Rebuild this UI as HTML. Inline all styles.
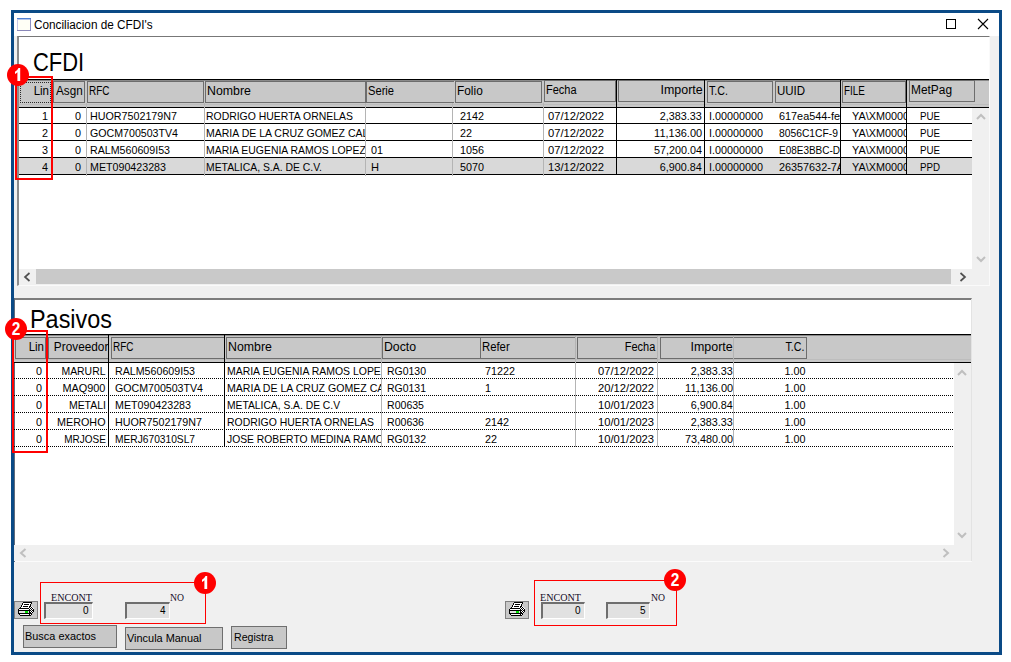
<!DOCTYPE html>
<html><head><meta charset="utf-8"><title>Conciliacion de CFDI's</title>
<style>
html,body{margin:0;padding:0;background:#fff;}
body{width:1011px;height:662px;position:relative;overflow:hidden;font-family:"Liberation Sans",sans-serif;color:#000;}
div,span,svg{position:absolute;box-sizing:border-box;}
.t{white-space:pre;line-height:normal;font-family:"Liberation Sans",sans-serif;}
.tf{font-family:"Liberation Serif",serif;}
.c{overflow:hidden;}
.hc{border:1px solid #6d6d6d;background:#c8c8c8;overflow:hidden;}
.btn{background:#c8c8c8;border:1px solid #6f6f6f;overflow:hidden;}
.inp{background:#e1e1e1;border-top:2px solid #6e6e6e;border-left:2px solid #6e6e6e;border-right:1px solid #fff;border-bottom:1px solid #fff;overflow:hidden;}
.red{border:2px solid #f00;}
.circ{width:22px;height:22px;border-radius:50%;background:#f00;}
</style></head>
<body>
<div style="left:11px;top:10px;width:991px;height:645px;background:#f0f0f0;border:3px solid #0a4a86;"></div>
<div style="left:14px;top:13px;width:985px;height:23px;background:#fff;"></div>
<svg style="left:17px;top:18px" width="14" height="13" viewBox="0 0 14 13" shape-rendering="crispEdges"><rect x="0" y="0" width="14" height="13" fill="#fffff6"/><rect x="0" y="0" width="1" height="13" fill="#c6c8e6"/><rect x="13" y="0" width="1" height="13" fill="#8d8fc2"/><rect x="0" y="12" width="14" height="1" fill="#8987b8"/><rect x="0" y="0" width="14" height="1" fill="#4f80d2"/><rect x="1" y="1" width="12" height="1" fill="#b5c6ec"/></svg>
<span class="t" style="top:18px;font-size:12.5px;left:34px;transform-origin:0 0;transform:scaleX(0.9412);">Conciliacion de CFDI's</span>
<svg style="left:946px;top:19px" width="10" height="10" viewBox="0 0 10 10" shape-rendering="crispEdges"><rect x="0.5" y="0.5" width="9" height="9" fill="none" stroke="#000" stroke-width="1"/></svg>
<svg style="left:977px;top:18px" width="12" height="12" viewBox="0 0 12 12"><path d="M1 1 L11 11 M11 1 L1 11" stroke="#000" stroke-width="1.1" fill="none"/></svg>
<div style="left:17px;top:36px;width:973px;height:250px;background:#fff;border-left:2px solid #8c8c8c;border-top:1px solid #777;border-right:1px solid #fafafa;border-bottom:1px solid #fafafa;"></div>
<div style="left:972px;top:108px;width:17px;height:161px;background:#f0f0f0;"></div>
<svg style="left:976px;top:113px" width="10" height="7" viewBox="0 0 10 7"><path d="M1 6 L5 2 L9 6" stroke="#bfbfbf" stroke-width="2" fill="none"/></svg>
<svg style="left:976px;top:256px" width="10" height="7" viewBox="0 0 10 7"><path d="M1 1 L5 5 L9 1" stroke="#bfbfbf" stroke-width="2" fill="none"/></svg>
<div style="left:19px;top:269px;width:970px;height:16px;background:#f0f0f0;"></div>
<div style="left:36px;top:269px;width:915px;height:15px;background:#c9c9c9;"></div>
<svg style="left:23px;top:272px" width="8" height="10" viewBox="0 0 8 10"><path d="M6.5 1 L2 5 L6.5 9" stroke="#505050" stroke-width="1.7" fill="none"/></svg>
<svg style="left:959px;top:272px" width="8" height="10" viewBox="0 0 8 10"><path d="M1.5 1 L6 5 L1.5 9" stroke="#505050" stroke-width="1.7" fill="none"/></svg>
<span class="t" style="top:48px;font-size:25px;left:33.0px;transform-origin:0 0;transform:scaleX(0.8778);">CFDI</span>
<div style="left:19px;top:79px;width:970px;height:29px;background:#c8c8c8;border-top:1px solid #000;border-bottom:1px solid #000;"></div>
<div style="left:19px;top:80px;width:970px;height:1px;background:#8a8a8a;"></div>
<div style="left:19px;top:104px;width:970px;height:1px;background:#bdbdbd;"></div>
<div class="hc" style="left:20px;top:82px;width:31px;height:21px;border:1px dotted #2a2a2a;"><span class="t" style="top:1px;font-size:12px;right:1px;transform-origin:100% 0;transform:scaleX(0.9577);">Lin</span></div>
<div class="hc" style="left:53px;top:81px;width:32px;height:22px;"><span class="t" style="top:2px;font-size:12px;left:2px;transform-origin:0 0;transform:scaleX(0.9753);">Asgn</span></div>
<div class="hc" style="left:87px;top:81px;width:117px;height:22px;"><span class="t" style="top:2px;font-size:12px;left:1px;transform-origin:0 0;transform:scaleX(0.8301);">RFC</span></div>
<div class="hc" style="left:205px;top:81px;width:161px;height:22px;"><span class="t" style="top:2px;font-size:12px;left:1px;transform-origin:0 0;transform:scaleX(1.0271);">Nombre</span></div>
<div class="hc" style="left:366px;top:81px;width:88px;height:22px;border-right:none;"><span class="t" style="top:2px;font-size:12px;left:1px;transform-origin:0 0;transform:scaleX(0.9283);">Serie</span></div>
<div class="hc" style="left:455px;top:81px;width:87px;height:22px;"><span class="t" style="top:2px;font-size:12px;left:1px;transform-origin:0 0;transform:scaleX(0.9892);">Folio</span></div>
<div class="hc" style="left:544px;top:80px;width:72px;height:22px;"><span class="t" style="top:2px;font-size:12px;left:1px;transform-origin:0 0;transform:scaleX(0.9168);">Fecha</span></div>
<div class="hc" style="left:618px;top:80px;width:87px;height:22px;border-right:none;"><span class="t" style="top:2px;font-size:12px;right:2px;transform-origin:100% 0;transform:scaleX(1.0354);">Importe</span></div>
<div class="hc" style="left:707px;top:81px;width:66px;height:22px;"><span class="t" style="top:2px;font-size:12px;left:1px;transform-origin:0 0;transform:scaleX(0.8870);">T.C.</span></div>
<div class="hc" style="left:775px;top:81px;width:66px;height:22px;border-right:none;"><span class="t" style="top:2px;font-size:12px;left:1px;transform-origin:0 0;transform:scaleX(0.9577);">UUID</span></div>
<div class="hc" style="left:842px;top:81px;width:64px;height:22px;"><span class="t" style="top:2px;font-size:12px;left:1px;transform-origin:0 0;transform:scaleX(0.8192);">FILE</span></div>
<div class="hc" style="left:909px;top:80px;width:66px;height:22px;"><span class="t" style="top:2px;font-size:12px;left:1px;transform-origin:0 0;transform:scaleX(0.9915);">MetPag</span></div>
<div style="left:19px;top:123px;width:953px;height:1px;background:#000;"></div>
<div class="c" style="left:19px;top:108px;width:33px;height:15px;"><span class="t" style="top:2px;font-size:11px;right:4.0px;transform-origin:100% 0;transform:scaleX(0.9808);">1</span></div>
<div class="c" style="left:53px;top:108px;width:33px;height:15px;"><span class="t" style="top:2px;font-size:11px;right:5.0px;transform-origin:100% 0;transform:scaleX(0.9808);">0</span></div>
<div class="c" style="left:87px;top:108px;width:117px;height:15px;"><span class="t" style="top:2px;font-size:11px;left:2.5px;transform-origin:0 0;transform:scaleX(0.9745);">HUOR7502179N7</span></div>
<div class="c" style="left:205px;top:108px;width:160px;height:15px;"><span class="t" style="top:2px;font-size:11px;left:0.5px;transform-origin:0 0;transform:scaleX(0.9486);">RODRIGO HUERTA ORNELAS</span></div>
<div class="c" style="left:453px;top:108px;width:90px;height:15px;"><span class="t" style="top:2px;font-size:11px;left:6.5px;transform-origin:0 0;transform:scaleX(0.9808);">2142</span></div>
<div class="c" style="left:544px;top:108px;width:72px;height:15px;"><span class="t" style="top:2px;font-size:11px;left:3.5px;transform-origin:0 0;transform:scaleX(1.0172);">07/12/2022</span></div>
<div class="c" style="left:617px;top:108px;width:87px;height:15px;"><span class="t" style="top:2px;font-size:11px;right:2.2000000000000455px;transform-origin:100% 0;transform:scaleX(0.9809);">2,383.33</span></div>
<div class="c" style="left:705px;top:108px;width:70px;height:15px;"><span class="t" style="top:2px;font-size:11px;left:4.0px;transform-origin:0 0;transform:scaleX(0.9809);">I.00000000</span></div>
<div class="c" style="left:775px;top:108px;width:65px;height:15px;"><span class="t" style="top:2px;font-size:11px;left:4.0px;transform-origin:0 0;transform:scaleX(0.9874);">617ea544-fe</span></div>
<div class="c" style="left:841px;top:108px;width:65px;height:15px;"><span class="t" style="top:2px;font-size:11px;left:10.5px;transform-origin:0 0;transform:scaleX(0.9847);">YA\XM0000</span></div>
<div class="c" style="left:908px;top:108px;width:64px;height:15px;"><span class="t" style="top:2px;font-size:11px;left:11.5px;transform-origin:0 0;transform:scaleX(0.8843);">PUE</span></div>
<div style="left:19px;top:140px;width:953px;height:1px;background:#000;"></div>
<div class="c" style="left:19px;top:124px;width:33px;height:16px;"><span class="t" style="top:3px;font-size:11px;right:4.0px;transform-origin:100% 0;transform:scaleX(0.9808);">2</span></div>
<div class="c" style="left:53px;top:124px;width:33px;height:16px;"><span class="t" style="top:3px;font-size:11px;right:5.0px;transform-origin:100% 0;transform:scaleX(0.9808);">0</span></div>
<div class="c" style="left:87px;top:124px;width:117px;height:16px;"><span class="t" style="top:3px;font-size:11px;left:2.5px;transform-origin:0 0;transform:scaleX(0.9660);">GOCM700503TV4</span></div>
<div class="c" style="left:205px;top:124px;width:160px;height:16px;"><span class="t" style="top:3px;font-size:11px;left:0.5px;transform-origin:0 0;transform:scaleX(0.9557);">MARIA DE LA CRUZ GOMEZ CAL</span></div>
<div class="c" style="left:453px;top:124px;width:90px;height:16px;"><span class="t" style="top:3px;font-size:11px;left:6.5px;transform-origin:0 0;transform:scaleX(0.9808);">22</span></div>
<div class="c" style="left:544px;top:124px;width:72px;height:16px;"><span class="t" style="top:3px;font-size:11px;left:3.5px;transform-origin:0 0;transform:scaleX(1.0172);">07/12/2022</span></div>
<div class="c" style="left:617px;top:124px;width:87px;height:16px;"><span class="t" style="top:3px;font-size:11px;right:2.2000000000000455px;transform-origin:100% 0;transform:scaleX(0.9975);">11,136.00</span></div>
<div class="c" style="left:705px;top:124px;width:70px;height:16px;"><span class="t" style="top:3px;font-size:11px;left:4.0px;transform-origin:0 0;transform:scaleX(0.9809);">I.00000000</span></div>
<div class="c" style="left:775px;top:124px;width:65px;height:16px;"><span class="t" style="top:3px;font-size:11px;left:4.0px;transform-origin:0 0;transform:scaleX(0.9369);">8056C1CF-9</span></div>
<div class="c" style="left:841px;top:124px;width:65px;height:16px;"><span class="t" style="top:3px;font-size:11px;left:10.5px;transform-origin:0 0;transform:scaleX(0.9847);">YA\XM0000</span></div>
<div class="c" style="left:908px;top:124px;width:64px;height:16px;"><span class="t" style="top:3px;font-size:11px;left:11.5px;transform-origin:0 0;transform:scaleX(0.8843);">PUE</span></div>
<div style="left:19px;top:157px;width:953px;height:1px;background:#000;"></div>
<div class="c" style="left:19px;top:141px;width:33px;height:16px;"><span class="t" style="top:3px;font-size:11px;right:4.0px;transform-origin:100% 0;transform:scaleX(0.9808);">3</span></div>
<div class="c" style="left:53px;top:141px;width:33px;height:16px;"><span class="t" style="top:3px;font-size:11px;right:5.0px;transform-origin:100% 0;transform:scaleX(0.9808);">0</span></div>
<div class="c" style="left:87px;top:141px;width:117px;height:16px;"><span class="t" style="top:3px;font-size:11px;left:2.5px;transform-origin:0 0;transform:scaleX(0.9690);">RALM560609I53</span></div>
<div class="c" style="left:205px;top:141px;width:160px;height:16px;"><span class="t" style="top:3px;font-size:11px;left:0.5px;transform-origin:0 0;transform:scaleX(0.9478);">MARIA EUGENIA RAMOS LOPEZ</span></div>
<div class="c" style="left:366px;top:141px;width:86px;height:16px;"><span class="t" style="top:3px;font-size:11px;left:4.5px;transform-origin:0 0;transform:scaleX(0.9808);">01</span></div>
<div class="c" style="left:453px;top:141px;width:90px;height:16px;"><span class="t" style="top:3px;font-size:11px;left:6.5px;transform-origin:0 0;transform:scaleX(0.9808);">1056</span></div>
<div class="c" style="left:544px;top:141px;width:72px;height:16px;"><span class="t" style="top:3px;font-size:11px;left:3.5px;transform-origin:0 0;transform:scaleX(1.0172);">07/12/2022</span></div>
<div class="c" style="left:617px;top:141px;width:87px;height:16px;"><span class="t" style="top:3px;font-size:11px;right:2.2000000000000455px;transform-origin:100% 0;transform:scaleX(0.9809);">57,200.04</span></div>
<div class="c" style="left:705px;top:141px;width:70px;height:16px;"><span class="t" style="top:3px;font-size:11px;left:4.0px;transform-origin:0 0;transform:scaleX(0.9809);">I.00000000</span></div>
<div class="c" style="left:775px;top:141px;width:65px;height:16px;"><span class="t" style="top:3px;font-size:11px;left:4.0px;transform-origin:0 0;transform:scaleX(0.9070);">E08E3BBC-D</span></div>
<div class="c" style="left:841px;top:141px;width:65px;height:16px;"><span class="t" style="top:3px;font-size:11px;left:10.5px;transform-origin:0 0;transform:scaleX(0.9847);">YA\XM0000</span></div>
<div class="c" style="left:908px;top:141px;width:64px;height:16px;"><span class="t" style="top:3px;font-size:11px;left:11.5px;transform-origin:0 0;transform:scaleX(0.8843);">PUE</span></div>
<div style="left:19px;top:158px;width:953px;height:16px;background:#d9d9d9;"></div>
<div style="left:19px;top:174px;width:953px;height:1px;background:#000;"></div>
<div class="c" style="left:19px;top:158px;width:33px;height:16px;"><span class="t" style="top:3px;font-size:11px;right:4.0px;transform-origin:100% 0;transform:scaleX(0.9808);">4</span></div>
<div class="c" style="left:53px;top:158px;width:33px;height:16px;"><span class="t" style="top:3px;font-size:11px;right:5.0px;transform-origin:100% 0;transform:scaleX(0.9808);">0</span></div>
<div class="c" style="left:87px;top:158px;width:117px;height:16px;"><span class="t" style="top:3px;font-size:11px;left:2.5px;transform-origin:0 0;transform:scaleX(0.9709);">MET090423283</span></div>
<div class="c" style="left:205px;top:158px;width:160px;height:16px;"><span class="t" style="top:3px;font-size:11px;left:0.5px;transform-origin:0 0;transform:scaleX(0.9441);">METALICA, S.A. DE C.V.</span></div>
<div class="c" style="left:366px;top:158px;width:86px;height:16px;"><span class="t" style="top:3px;font-size:11px;left:4.5px;transform-origin:0 0;transform:scaleX(1.0071);">H</span></div>
<div class="c" style="left:453px;top:158px;width:90px;height:16px;"><span class="t" style="top:3px;font-size:11px;left:6.5px;transform-origin:0 0;transform:scaleX(0.9808);">5070</span></div>
<div class="c" style="left:544px;top:158px;width:72px;height:16px;"><span class="t" style="top:3px;font-size:11px;left:3.5px;transform-origin:0 0;transform:scaleX(1.0172);">13/12/2022</span></div>
<div class="c" style="left:617px;top:158px;width:87px;height:16px;"><span class="t" style="top:3px;font-size:11px;right:2.2000000000000455px;transform-origin:100% 0;transform:scaleX(0.9809);">6,900.84</span></div>
<div class="c" style="left:705px;top:158px;width:70px;height:16px;"><span class="t" style="top:3px;font-size:11px;left:4.0px;transform-origin:0 0;transform:scaleX(0.9809);">I.00000000</span></div>
<div class="c" style="left:775px;top:158px;width:65px;height:16px;"><span class="t" style="top:3px;font-size:11px;left:4.0px;transform-origin:0 0;transform:scaleX(0.9840);">26357632-7A</span></div>
<div class="c" style="left:841px;top:158px;width:65px;height:16px;"><span class="t" style="top:3px;font-size:11px;left:10.5px;transform-origin:0 0;transform:scaleX(0.9847);">YA\XM0000</span></div>
<div class="c" style="left:908px;top:158px;width:64px;height:16px;"><span class="t" style="top:3px;font-size:11px;left:11.5px;transform-origin:0 0;transform:scaleX(0.8843);">PPD</span></div>
<div style="left:86px;top:103px;width:1px;height:73px;background:#b4b4b4;"></div>
<div style="left:204px;top:103px;width:1px;height:73px;background:#b4b4b4;"></div>
<div style="left:365px;top:103px;width:1px;height:73px;background:#b4b4b4;"></div>
<div style="left:452px;top:103px;width:1px;height:73px;background:#b4b4b4;"></div>
<div style="left:543px;top:103px;width:1px;height:73px;background:#b4b4b4;"></div>
<div style="left:616px;top:80px;width:1px;height:95px;background:#000;"></div>
<div style="left:704px;top:80px;width:1px;height:95px;background:#000;"></div>
<div style="left:840px;top:80px;width:1px;height:95px;background:#000;"></div>
<div style="left:906px;top:80px;width:1px;height:95px;background:#000;"></div>
<div style="left:14px;top:298px;width:958px;height:264px;background:#fff;border-top:2px solid #7d7d7d;border-right:1px solid #f6f6f6;border-bottom:1px solid #fbfbfb;"></div>
<div style="left:971px;top:299px;width:1px;height:262px;background:#e3e3e3;"></div>
<div style="left:14px;top:298px;width:1px;height:264px;background:#5f6b7c;"></div>
<div style="left:954px;top:363px;width:17px;height:182px;background:#f0f0f0;"></div>
<svg style="left:957px;top:369px" width="10" height="7" viewBox="0 0 10 7"><path d="M1 6 L5 2 L9 6" stroke="#bfbfbf" stroke-width="2" fill="none"/></svg>
<svg style="left:957px;top:532px" width="10" height="7" viewBox="0 0 10 7"><path d="M1 1 L5 5 L9 1" stroke="#bfbfbf" stroke-width="2" fill="none"/></svg>
<div style="left:14px;top:545px;width:957px;height:16px;background:#f0f0f0;"></div>
<svg style="left:19px;top:548px" width="8" height="10" viewBox="0 0 8 10"><path d="M6.5 1 L2 5 L6.5 9" stroke="#bfbfbf" stroke-width="2" fill="none"/></svg>
<svg style="left:942px;top:548px" width="8" height="10" viewBox="0 0 8 10"><path d="M1.5 1 L6 5 L1.5 9" stroke="#bfbfbf" stroke-width="2" fill="none"/></svg>
<span class="t" style="top:305px;font-size:25px;left:30.0px;transform-origin:0 0;transform:scaleX(0.9367);">Pasivos</span>
<div style="left:14px;top:334px;width:957px;height:29px;background:#c8c8c8;border-top:1px solid #000;border-bottom:1px solid #000;"></div>
<div style="left:14px;top:335px;width:957px;height:1px;background:#8a8a8a;"></div>
<div style="left:14px;top:359px;width:957px;height:1px;background:#bdbdbd;"></div>
<div class="hc" style="left:15px;top:337px;width:31px;height:22px;"><span class="t" style="top:2px;font-size:12px;right:1px;transform-origin:100% 0;transform:scaleX(0.9577);">Lin</span></div>
<div class="hc" style="left:48px;top:337px;width:61px;height:22px;border-right:none;"><span class="t" style="top:2px;font-size:12px;right:0.5px;transform-origin:100% 0;transform:scaleX(0.9842);">Proveedor</span></div>
<div class="hc" style="left:111px;top:337px;width:114px;height:22px;border-right:none;"><span class="t" style="top:2px;font-size:12px;left:1px;transform-origin:0 0;transform:scaleX(0.8301);">RFC</span></div>
<div class="hc" style="left:226px;top:337px;width:155px;height:22px;border-right:none;"><span class="t" style="top:2px;font-size:12px;left:0.5px;transform-origin:0 0;transform:scaleX(1.0271);">Nombre</span></div>
<div class="hc" style="left:382px;top:337px;width:99px;height:22px;"><span class="t" style="top:2px;font-size:12px;left:1px;transform-origin:0 0;transform:scaleX(1.0236);">Docto</span></div>
<div class="hc" style="left:480px;top:337px;width:95px;height:22px;border-right:none;"><span class="t" style="top:2px;font-size:12px;left:1px;transform-origin:0 0;transform:scaleX(0.9430);">Refer</span></div>
<div class="hc" style="left:577px;top:337px;width:80px;height:22px;border-right:none;"><span class="t" style="top:2px;font-size:12px;right:2px;transform-origin:100% 0;transform:scaleX(0.9168);">Fecha</span></div>
<div class="hc" style="left:660px;top:337px;width:74px;height:22px;border-right:none;"><span class="t" style="top:2px;font-size:12px;right:1.5px;transform-origin:100% 0;transform:scaleX(1.0354);">Importe</span></div>
<div class="hc" style="left:733px;top:337px;width:74px;height:22px;border-left:none;"><span class="t" style="top:2px;font-size:12px;right:1.2000000000000455px;transform-origin:100% 0;transform:scaleX(0.8870);">T.C.</span></div>
<div style="left:14px;top:378px;width:939px;height:1px;background-image:repeating-linear-gradient(90deg,#000 0,#000 1px,transparent 1px,transparent 2px);"></div>
<div class="c" style="left:15px;top:363px;width:31px;height:15px;"><span class="t" style="top:2px;font-size:11px;right:3.700000000000003px;transform-origin:100% 0;transform:scaleX(0.9808);">0</span></div>
<div class="c" style="left:47px;top:363px;width:61px;height:15px;"><span class="t" style="top:2px;font-size:11px;right:2.0999999999999943px;transform-origin:100% 0;transform:scaleX(0.9473);">MARURL</span></div>
<div class="c" style="left:110px;top:363px;width:114px;height:15px;"><span class="t" style="top:2px;font-size:11px;left:4.5px;transform-origin:0 0;transform:scaleX(0.9690);">RALM560609I53</span></div>
<div class="c" style="left:226px;top:363px;width:155px;height:15px;"><span class="t" style="top:2px;font-size:11px;left:1.0px;transform-origin:0 0;transform:scaleX(0.9496);">MARIA EUGENIA RAMOS LOPE</span></div>
<div class="c" style="left:383px;top:363px;width:97px;height:15px;"><span class="t" style="top:2px;font-size:11px;left:3.5px;transform-origin:0 0;transform:scaleX(0.9519);">RG0130</span></div>
<div class="c" style="left:481px;top:363px;width:94px;height:15px;"><span class="t" style="top:2px;font-size:11px;left:3.5px;transform-origin:0 0;transform:scaleX(0.9808);">71222</span></div>
<div class="c" style="left:577px;top:363px;width:80px;height:15px;"><span class="t" style="top:2px;font-size:11px;right:2.5px;transform-origin:100% 0;transform:scaleX(1.0172);">07/12/2022</span></div>
<div class="c" style="left:659px;top:363px;width:74px;height:15px;"><span class="t" style="top:2px;font-size:11px;right:0.0px;transform-origin:100% 0;transform:scaleX(0.9809);">2,383.33</span></div>
<div class="c" style="left:735px;top:363px;width:85px;height:15px;"><span class="t" style="top:2px;font-size:11px;right:14.299999999999955px;transform-origin:100% 0;transform:scaleX(0.9809);">1.00</span></div>
<div style="left:14px;top:395px;width:939px;height:1px;background-image:repeating-linear-gradient(90deg,#000 0,#000 1px,transparent 1px,transparent 2px);"></div>
<div class="c" style="left:15px;top:380px;width:31px;height:15px;"><span class="t" style="top:2px;font-size:11px;right:3.700000000000003px;transform-origin:100% 0;transform:scaleX(0.9808);">0</span></div>
<div class="c" style="left:47px;top:380px;width:61px;height:15px;"><span class="t" style="top:2px;font-size:11px;right:2.0999999999999943px;transform-origin:100% 0;transform:scaleX(0.9906);">MAQ900</span></div>
<div class="c" style="left:110px;top:380px;width:114px;height:15px;"><span class="t" style="top:2px;font-size:11px;left:4.5px;transform-origin:0 0;transform:scaleX(0.9660);">GOCM700503TV4</span></div>
<div class="c" style="left:226px;top:380px;width:155px;height:15px;"><span class="t" style="top:2px;font-size:11px;left:1.0px;transform-origin:0 0;transform:scaleX(0.9605);">MARIA DE LA CRUZ GOMEZ CA</span></div>
<div class="c" style="left:383px;top:380px;width:97px;height:15px;"><span class="t" style="top:2px;font-size:11px;left:3.5px;transform-origin:0 0;transform:scaleX(0.9519);">RG0131</span></div>
<div class="c" style="left:481px;top:380px;width:94px;height:15px;"><span class="t" style="top:2px;font-size:11px;left:3.5px;transform-origin:0 0;transform:scaleX(0.9808);">1</span></div>
<div class="c" style="left:577px;top:380px;width:80px;height:15px;"><span class="t" style="top:2px;font-size:11px;right:2.5px;transform-origin:100% 0;transform:scaleX(1.0172);">20/12/2022</span></div>
<div class="c" style="left:659px;top:380px;width:74px;height:15px;"><span class="t" style="top:2px;font-size:11px;right:0.0px;transform-origin:100% 0;transform:scaleX(0.9975);">11,136.00</span></div>
<div class="c" style="left:735px;top:380px;width:85px;height:15px;"><span class="t" style="top:2px;font-size:11px;right:14.299999999999955px;transform-origin:100% 0;transform:scaleX(0.9809);">1.00</span></div>
<div style="left:14px;top:412px;width:939px;height:1px;background-image:repeating-linear-gradient(90deg,#000 0,#000 1px,transparent 1px,transparent 2px);"></div>
<div class="c" style="left:15px;top:397px;width:31px;height:15px;"><span class="t" style="top:2px;font-size:11px;right:3.700000000000003px;transform-origin:100% 0;transform:scaleX(0.9808);">0</span></div>
<div class="c" style="left:47px;top:397px;width:61px;height:15px;"><span class="t" style="top:2px;font-size:11px;right:2.0999999999999943px;transform-origin:100% 0;transform:scaleX(0.9508);">METALI</span></div>
<div class="c" style="left:110px;top:397px;width:114px;height:15px;"><span class="t" style="top:2px;font-size:11px;left:4.5px;transform-origin:0 0;transform:scaleX(0.9709);">MET090423283</span></div>
<div class="c" style="left:226px;top:397px;width:155px;height:15px;"><span class="t" style="top:2px;font-size:11px;left:1.0px;transform-origin:0 0;transform:scaleX(0.9352);">METALICA, S.A. DE C.V</span></div>
<div class="c" style="left:383px;top:397px;width:97px;height:15px;"><span class="t" style="top:2px;font-size:11px;left:3.5px;transform-origin:0 0;transform:scaleX(0.9602);">R00635</span></div>
<div class="c" style="left:577px;top:397px;width:80px;height:15px;"><span class="t" style="top:2px;font-size:11px;right:2.5px;transform-origin:100% 0;transform:scaleX(1.0172);">10/01/2023</span></div>
<div class="c" style="left:659px;top:397px;width:74px;height:15px;"><span class="t" style="top:2px;font-size:11px;right:0.0px;transform-origin:100% 0;transform:scaleX(0.9809);">6,900.84</span></div>
<div class="c" style="left:735px;top:397px;width:85px;height:15px;"><span class="t" style="top:2px;font-size:11px;right:14.299999999999955px;transform-origin:100% 0;transform:scaleX(0.9809);">1.00</span></div>
<div style="left:14px;top:429px;width:939px;height:1px;background-image:repeating-linear-gradient(90deg,#000 0,#000 1px,transparent 1px,transparent 2px);"></div>
<div class="c" style="left:15px;top:414px;width:31px;height:15px;"><span class="t" style="top:2px;font-size:11px;right:3.700000000000003px;transform-origin:100% 0;transform:scaleX(0.9808);">0</span></div>
<div class="c" style="left:47px;top:414px;width:61px;height:15px;"><span class="t" style="top:2px;font-size:11px;right:2.0999999999999943px;transform-origin:100% 0;transform:scaleX(0.9780);">MEROHO</span></div>
<div class="c" style="left:110px;top:414px;width:114px;height:15px;"><span class="t" style="top:2px;font-size:11px;left:4.5px;transform-origin:0 0;transform:scaleX(0.9745);">HUOR7502179N7</span></div>
<div class="c" style="left:226px;top:414px;width:155px;height:15px;"><span class="t" style="top:2px;font-size:11px;left:1.0px;transform-origin:0 0;transform:scaleX(0.9486);">RODRIGO HUERTA ORNELAS</span></div>
<div class="c" style="left:383px;top:414px;width:97px;height:15px;"><span class="t" style="top:2px;font-size:11px;left:3.5px;transform-origin:0 0;transform:scaleX(0.9602);">R00636</span></div>
<div class="c" style="left:481px;top:414px;width:94px;height:15px;"><span class="t" style="top:2px;font-size:11px;left:3.5px;transform-origin:0 0;transform:scaleX(0.9808);">2142</span></div>
<div class="c" style="left:577px;top:414px;width:80px;height:15px;"><span class="t" style="top:2px;font-size:11px;right:2.5px;transform-origin:100% 0;transform:scaleX(1.0172);">10/01/2023</span></div>
<div class="c" style="left:659px;top:414px;width:74px;height:15px;"><span class="t" style="top:2px;font-size:11px;right:0.0px;transform-origin:100% 0;transform:scaleX(0.9809);">2,383.33</span></div>
<div class="c" style="left:735px;top:414px;width:85px;height:15px;"><span class="t" style="top:2px;font-size:11px;right:14.299999999999955px;transform-origin:100% 0;transform:scaleX(0.9809);">1.00</span></div>
<div style="left:14px;top:446px;width:939px;height:1px;background-image:repeating-linear-gradient(90deg,#000 0,#000 1px,transparent 1px,transparent 2px);"></div>
<div class="c" style="left:15px;top:431px;width:31px;height:15px;"><span class="t" style="top:2px;font-size:11px;right:3.700000000000003px;transform-origin:100% 0;transform:scaleX(0.9808);">0</span></div>
<div class="c" style="left:47px;top:431px;width:61px;height:15px;"><span class="t" style="top:2px;font-size:11px;right:2.0999999999999943px;transform-origin:100% 0;transform:scaleX(0.9079);">MRJOSE</span></div>
<div class="c" style="left:110px;top:431px;width:114px;height:15px;"><span class="t" style="top:2px;font-size:11px;left:4.5px;transform-origin:0 0;transform:scaleX(0.9278);">MERJ670310SL7</span></div>
<div class="c" style="left:226px;top:431px;width:155px;height:15px;"><span class="t" style="top:2px;font-size:11px;left:1.0px;transform-origin:0 0;transform:scaleX(0.9389);">JOSE ROBERTO MEDINA RAMO</span></div>
<div class="c" style="left:383px;top:431px;width:97px;height:15px;"><span class="t" style="top:2px;font-size:11px;left:3.5px;transform-origin:0 0;transform:scaleX(0.9519);">RG0132</span></div>
<div class="c" style="left:481px;top:431px;width:94px;height:15px;"><span class="t" style="top:2px;font-size:11px;left:3.5px;transform-origin:0 0;transform:scaleX(0.9808);">22</span></div>
<div class="c" style="left:577px;top:431px;width:80px;height:15px;"><span class="t" style="top:2px;font-size:11px;right:2.5px;transform-origin:100% 0;transform:scaleX(1.0172);">10/01/2023</span></div>
<div class="c" style="left:659px;top:431px;width:74px;height:15px;"><span class="t" style="top:2px;font-size:11px;right:0.0px;transform-origin:100% 0;transform:scaleX(0.9809);">73,480.00</span></div>
<div class="c" style="left:735px;top:431px;width:85px;height:15px;"><span class="t" style="top:2px;font-size:11px;right:14.299999999999955px;transform-origin:100% 0;transform:scaleX(0.9809);">1.00</span></div>
<div style="left:381px;top:336px;width:1px;height:111px;background:#b4b4b4;"></div>
<div style="left:575px;top:336px;width:1px;height:111px;background:#b4b4b4;"></div>
<div style="left:657px;top:336px;width:1px;height:111px;background:#b4b4b4;"></div>
<div style="left:733px;top:336px;width:1px;height:111px;background:#b4b4b4;"></div>
<div style="left:108px;top:335px;width:1px;height:112px;background:#000;"></div>
<div style="left:224px;top:335px;width:1px;height:112px;background:#000;"></div>
<div style="left:14px;top:601px;width:24px;height:18px;background:#c8c8c8;border:1px solid #808080;"></div>
<svg style="left:18px;top:602px" width="16" height="14" viewBox="0 0 16 14" shape-rendering="crispEdges"><path d="M5 0h9v1h-9zM4 1h1v1h-1zM13 1h1v1h-1zM4 2h1v1h-1zM6 2h5v1h-5zM12 2h1v1h-1zM3 3h1v1h-1zM12 3h1v1h-1zM3 4h1v1h-1zM5 4h5v1h-5zM11 4h2v1h-2zM2 5h1v1h-1zM11 5h1v1h-1zM13 5h1v1h-1zM1 6h10v1h-10zM12 6h1v1h-1zM14 6h1v1h-1zM0 7h1v1h-1zM11 7h1v1h-1zM13 7h1v1h-1zM15 7h1v1h-1zM0 8h13v1h-13zM14 8h2v1h-2zM0 9h1v1h-1zM11 9h1v1h-1zM13 9h1v1h-1zM15 9h1v1h-1zM0 10h1v1h-1zM11 10h2v1h-2zM14 10h1v1h-1zM0 11h14v1h-14zM1 12h1v1h-1zM11 12h1v1h-1zM13 12h1v1h-1zM2 13h11v1h-11z" fill="#000"/><path d="M5 1h8v1h-8zM5 2h1v1h-1zM11 2h1v1h-1zM4 3h8v1h-8zM4 4h1v1h-1zM10 4h1v1h-1zM13 4h1v1h-1zM3 5h8v1h-8zM12 5h1v1h-1zM14 5h1v1h-1zM11 6h1v1h-1zM13 6h1v1h-1zM15 6h1v1h-1zM1 7h10v1h-10zM12 7h1v1h-1zM14 7h1v1h-1zM13 8h1v1h-1zM12 9h1v1h-1zM14 9h1v1h-1zM13 10h1v1h-1zM2 12h9v1h-9zM12 12h1v1h-1z" fill="#fff"/><path d="M1 9h6v1h-6zM10 9h1v1h-1zM1 10h6v1h-6zM10 10h1v1h-1z" fill="#e4e4e4"/><path d="M7 9h3v1h-3zM7 10h3v1h-3z" fill="#00e000"/></svg>
<div class="red" style="left:40px;top:582px;width:166px;height:42px;border-width:1px;"></div>
<div class="c" style="left:49px;top:590px;width:47px;height:11px;"><span class="t tf" style="top:2px;font-size:10.5px;left:2px;transform-origin:0 0;transform:scaleX(0.9629);color:#140c28;">ENCONT</span></div>
<div class="c" style="left:168px;top:590px;width:20px;height:11px;"><span class="t tf" style="top:2px;font-size:10.5px;left:2px;transform-origin:0 0;transform:scaleX(0.9231);color:#140c28;">NO</span></div>
<div class="inp" style="left:44px;top:602px;width:49px;height:17px;"><span class="t" style="top:1px;font-size:10px;right:3.5px;transform-origin:100% 0;">0</span></div>
<div class="inp" style="left:125px;top:602px;width:45px;height:17px;"><span class="t" style="top:1px;font-size:10px;right:3.5px;transform-origin:100% 0;">4</span></div>
<div class="circ" style="left:194px;top:572px;"></div>
<svg style="left:194px;top:572px" width="22" height="22" viewBox="0 0 22 22"><path d="M11.5 3.9 L13.2 3.9 L13.2 17.1 L10.4 17.1 L10.4 8.3 Q9.4 9.3 8.0 9.9 L8.0 7.7 Q10.3 6.6 11.5 3.9 Z" fill="#fff"/></svg>
<div style="left:505px;top:601px;width:24px;height:18px;background:#c8c8c8;border:1px solid #808080;"></div>
<svg style="left:509px;top:602px" width="16" height="14" viewBox="0 0 16 14" shape-rendering="crispEdges"><path d="M5 0h9v1h-9zM4 1h1v1h-1zM13 1h1v1h-1zM4 2h1v1h-1zM6 2h5v1h-5zM12 2h1v1h-1zM3 3h1v1h-1zM12 3h1v1h-1zM3 4h1v1h-1zM5 4h5v1h-5zM11 4h2v1h-2zM2 5h1v1h-1zM11 5h1v1h-1zM13 5h1v1h-1zM1 6h10v1h-10zM12 6h1v1h-1zM14 6h1v1h-1zM0 7h1v1h-1zM11 7h1v1h-1zM13 7h1v1h-1zM15 7h1v1h-1zM0 8h13v1h-13zM14 8h2v1h-2zM0 9h1v1h-1zM11 9h1v1h-1zM13 9h1v1h-1zM15 9h1v1h-1zM0 10h1v1h-1zM11 10h2v1h-2zM14 10h1v1h-1zM0 11h14v1h-14zM1 12h1v1h-1zM11 12h1v1h-1zM13 12h1v1h-1zM2 13h11v1h-11z" fill="#000"/><path d="M5 1h8v1h-8zM5 2h1v1h-1zM11 2h1v1h-1zM4 3h8v1h-8zM4 4h1v1h-1zM10 4h1v1h-1zM13 4h1v1h-1zM3 5h8v1h-8zM12 5h1v1h-1zM14 5h1v1h-1zM11 6h1v1h-1zM13 6h1v1h-1zM15 6h1v1h-1zM1 7h10v1h-10zM12 7h1v1h-1zM14 7h1v1h-1zM13 8h1v1h-1zM12 9h1v1h-1zM14 9h1v1h-1zM13 10h1v1h-1zM2 12h9v1h-9zM12 12h1v1h-1z" fill="#fff"/><path d="M1 9h6v1h-6zM10 9h1v1h-1zM1 10h6v1h-6zM10 10h1v1h-1z" fill="#e4e4e4"/><path d="M7 9h3v1h-3zM7 10h3v1h-3z" fill="#00e000"/></svg>
<div class="red" style="left:534px;top:580px;width:143px;height:46px;border-width:1px;"></div>
<div class="c" style="left:537.5px;top:590px;width:47px;height:11px;"><span class="t tf" style="top:2px;font-size:10.5px;left:2px;transform-origin:0 0;transform:scaleX(0.9629);color:#140c28;">ENCONT</span></div>
<div class="c" style="left:648.5px;top:590px;width:20px;height:11px;"><span class="t tf" style="top:2px;font-size:10.5px;left:2px;transform-origin:0 0;transform:scaleX(0.9231);color:#140c28;">NO</span></div>
<div class="inp" style="left:541px;top:602px;width:44px;height:17px;"><span class="t" style="top:1px;font-size:10px;right:3.5px;transform-origin:100% 0;">0</span></div>
<div class="inp" style="left:606px;top:602px;width:44px;height:17px;"><span class="t" style="top:1px;font-size:10px;right:3.5px;transform-origin:100% 0;">5</span></div>
<div class="circ" style="left:664px;top:569px;"></div>
<div style="left:664px;top:569px;width:22px;height:22px;"><span class="t" style="top:1px;font-size:18px;left:0px;transform-origin:0 0;color:#fff;font-weight:bold;left:0;width:22px;text-align:center;transform:scaleX(0.86);transform-origin:50% 50%;">2</span></div>
<div class="btn" style="left:23px;top:625px;width:94px;height:23px;"><span class="t" style="top:4px;font-size:11px;left:1px;transform-origin:0 0;transform:scaleX(0.9925);">Busca exactos</span></div>
<div class="btn" style="left:125px;top:627px;width:98px;height:23px;"><span class="t" style="top:4px;font-size:11px;left:0.5px;transform-origin:0 0;transform:scaleX(0.9932);">Vincula Manual</span></div>
<div class="btn" style="left:231px;top:626px;width:56px;height:23px;"><span class="t" style="top:4px;font-size:11px;left:1.5px;transform-origin:0 0;transform:scaleX(0.9644);">Registra</span></div>
<div class="red" style="left:15px;top:76px;width:38px;height:104px;"></div>
<div class="circ" style="left:7px;top:64px;"></div>
<svg style="left:7px;top:64px" width="22" height="22" viewBox="0 0 22 22"><path d="M11.5 3.9 L13.2 3.9 L13.2 17.1 L10.4 17.1 L10.4 8.3 Q9.4 9.3 8.0 9.9 L8.0 7.7 Q10.3 6.6 11.5 3.9 Z" fill="#fff"/></svg>
<div class="red" style="left:12px;top:330px;width:36px;height:123px;"></div>
<div class="circ" style="left:5px;top:318px;"></div>
<div style="left:5px;top:318px;width:22px;height:22px;"><span class="t" style="top:1px;font-size:18px;left:0px;transform-origin:0 0;color:#fff;font-weight:bold;left:0;width:22px;text-align:center;transform:scaleX(0.86);transform-origin:50% 50%;">2</span></div>
</body></html>
